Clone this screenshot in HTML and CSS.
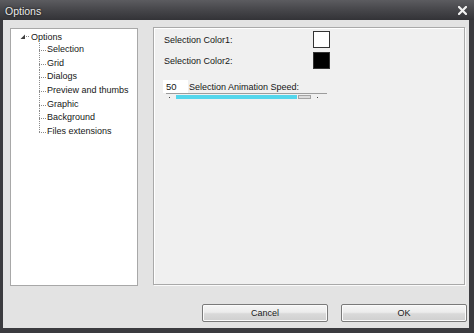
FILE: index.html
```html
<!DOCTYPE html>
<html>
<head>
<meta charset="utf-8">
<link rel="stylesheet" href="styles.css">
</head>
<body>
<div class="window">
  <div class="titlebar">
    <span class="title">Options</span>
    <svg class="close" width="9" height="9" viewBox="0 0 9 9"><path d="M1 1 L8 8 M8 1 L1 8" stroke="#f2f2f2" stroke-width="2.2" stroke-linecap="square"/></svg>
  </div>
  <div class="client">
    <div class="panels">
      <div class="tree">
        <div class="root">
          <svg class="expander" width="6" height="6" viewBox="0 0 6 6"><polygon points="5,0.5 5,5 0.5,5" fill="#404040"/></svg>
          <span class="rootdot"></span>
          <span>Options</span>
        </div>
        <div class="children">
          <div class="node">Selection</div>
          <div class="node">Grid</div>
          <div class="node">Dialogs</div>
          <div class="node">Preview and thumbs</div>
          <div class="node">Graphic</div>
          <div class="node">Background</div>
          <div class="node last">Files extensions</div>
        </div>
      </div>
      <div class="settings">
        <div class="colorrow">
          <span class="label">Selection Color1:</span>
          <span class="swatch white"></span>
        </div>
        <div class="colorrow">
          <span class="label">Selection Color2:</span>
          <span class="swatch black"></span>
        </div>
        <div class="speed">
          <div class="speedrow">
            <span class="spin">50</span>
            <span class="label">Selection Animation Speed:</span>
          </div>
          <div class="slider">
            <span class="tick"></span>
            <span class="fill"></span>
            <span class="thumb"></span>
            <span class="tick right"></span>
          </div>
        </div>
      </div>
    </div>
    <div class="buttons">
      <button class="btn">Cancel</button>
      <button class="btn">OK</button>
    </div>
  </div>
</div>
</body>
</html>
```
FILE: styles.css
```css
html, body {
  margin: 0;
  padding: 0;
  background: #3a3a3e;
}
.window {
  width: 474px;
  height: 333px;
  background: #3b3b3f;
  display: flex;
  flex-direction: column;
  font-family: "Liberation Sans", Arial, sans-serif;
  font-size: 9px;
  color: #161616;
}
.titlebar {
  height: 20px;
  display: flex;
  align-items: center;
  justify-content: space-between;
  padding: 0 7px 0 5px;
  background: linear-gradient(#5c5c60 0%, #48484c 45%, #333337 100%);
}
.title {
  color: #ececec;
  font-size: 10.5px;
  text-shadow: 0 0 2px #000;
  margin-top: 1px;
}
.close {
  display: block;
  margin-top: 1px;
}
.client {
  margin: 0 5px 5px 3px;
  height: 308px;
  background: #e3e3e3;
  box-sizing: border-box;
  padding: 7px 2px 0 7px;
}
.panels {
  display: flex;
  gap: 15px;
  align-items: flex-start;
}
.tree {
  width: 128px;
  height: 258px;
  margin-top: 1px;
  box-sizing: border-box;
  background: #fff;
  border: 1px solid #a8a8a8;
  padding: 1px 0 0 9px;
}
.root {
  display: flex;
  align-items: center;
  height: 13px;
}
.expander {
  display: block;
}
.rootdot {
  width: 4px;
  height: 1px;
  margin-right: 1px;
  background: repeating-linear-gradient(90deg, #8a8a8a 0 1px, transparent 1px 2px);
}
.children {
  margin-left: 19px;
}
.node {
  height: 13.67px;
  line-height: 13.67px;
  padding-left: 8px;
  background:
    repeating-linear-gradient(90deg, #8a8a8a 0 1px, transparent 1px 2px) 0 7px / 7px 1px no-repeat,
    repeating-linear-gradient(180deg, #8a8a8a 0 1px, transparent 1px 2px) 0 0 / 1px 100% no-repeat;
}
.node.last {
  background:
    repeating-linear-gradient(90deg, #8a8a8a 0 1px, transparent 1px 2px) 0 7px / 7px 1px no-repeat,
    repeating-linear-gradient(180deg, #8a8a8a 0 1px, transparent 1px 2px) 0 0 / 1px 8px no-repeat;
}
.settings {
  width: 312px;
  height: 258px;
  box-sizing: border-box;
  background: #f0f0f0;
  border: 1px solid #a9a9a9;
  box-shadow: inset 1px 1px 0 #fff, 1px 1px 0 #fafafa;
  padding: 3px 0 0 9px;
}
.colorrow {
  display: flex;
  align-items: center;
  height: 17px;
  margin-bottom: 4px;
}
.colorrow .label {
  width: 149px;
  padding-left: 1px;
}
.swatch {
  width: 15px;
  height: 15px;
  border: 1px solid #333;
}
.swatch.white { background: #fff; }
.swatch.black { background: #000; }
.speed {
  margin-top: 11px;
}
.speedrow {
  display: flex;
  align-items: center;
  height: 13px;
}
.spin {
  width: 22px;
  height: 13px;
  line-height: 14px;
  padding-left: 3px;
  background: #fff;
  font-size: 9.5px;
}
.speedrow .label {
  margin-left: 1px;
}
.slider {
  display: flex;
  align-items: center;
  width: 161px;
  height: 5px;
  margin-left: 3px;
  border-top: 1px solid #9c9c9c;
}
.tick {
  width: 1px;
  height: 1px;
  background: #444;
  margin: 2px 6px 0 3px;
}
.tick.right {
  margin: 2px 0 0 6px;
}
.fill {
  width: 121px;
  height: 4px;
  background: #53d6ec;
}
.thumb {
  width: 13px;
  height: 4px;
  margin-left: 1px;
  box-sizing: border-box;
  border: 1px solid #a4a4a4;
  background: #dcdcdc;
}
.buttons {
  display: flex;
  justify-content: flex-end;
  gap: 13px;
  margin-top: 18px;
}
.btn {
  width: 126px;
  height: 18px;
  padding: 0;
  font-family: "Liberation Sans", Arial, sans-serif;
  font-size: 9px;
  color: #1a1a1a;
  border: 1px solid #7a7a7a;
  border-radius: 2px;
  background: linear-gradient(#f6f6f6 0%, #ececec 45%, #d9d9d9 55%, #cfcfcf 100%);
  box-shadow: inset 0 0 0 1px #fbfbfb;
}
```
